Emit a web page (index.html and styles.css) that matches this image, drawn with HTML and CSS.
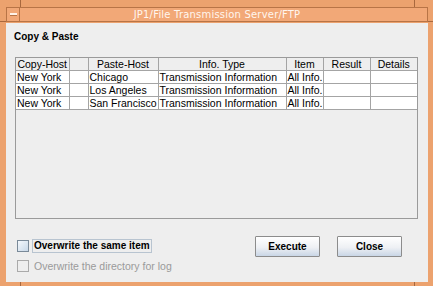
FILE: index.html
```html
<!DOCTYPE html>
<html lang="en">
<head>
	<meta charset="UTF-8">
	<title>JP1/File Transmission Server/FTP</title>
	<link rel="stylesheet" href="styles.css">
</head>
<body>
<div class="window">
	<i class="notch notch-tl"></i>
	<i class="notch notch-tr"></i>
	<i class="notch notch-bl"></i>
	<i class="notch notch-br"></i>
	<i class="notch notch-lt"></i>
	<i class="notch notch-rt"></i>
	<div class="titlebar">
		<span class="menu-btn"><i></i></span>
		<span class="title">JP1/File Transmission Server/FTP</span>
	</div>
	<div class="content">
		<p class="heading">Copy &amp; Paste</p>
		<div class="pane">
			<table class="grid">
				<colgroup>
					<col style="width: 53px">
					<col style="width: 19px">
					<col style="width: 70px">
					<col style="width: 128px">
					<col style="width: 37px">
					<col style="width: 47px">
					<col>
				</colgroup>
				<thead>
				<tr>
					<th>Copy-Host</th>
					<th></th>
					<th>Paste-Host</th>
					<th>Info. Type</th>
					<th>Item</th>
					<th>Result</th>
					<th>Details</th>
				</tr>
				</thead>
				<tbody>
				<tr>
					<td>New York</td>
					<td></td>
					<td>Chicago</td>
					<td>Transmission Information</td>
					<td>All Info.</td>
					<td></td>
					<td></td>
				</tr>
				<tr>
					<td>New York</td>
					<td></td>
					<td>Los Angeles</td>
					<td>Transmission Information</td>
					<td>All Info.</td>
					<td></td>
					<td></td>
				</tr>
				<tr>
					<td>New York</td>
					<td></td>
					<td>San Francisco</td>
					<td>Transmission Information</td>
					<td>All Info.</td>
					<td></td>
					<td></td>
				</tr>
				</tbody>
			</table>
		</div>
		<div class="footer">
			<div class="options">
				<label class="check"><i class="box"></i><span class="focus">Overwrite the same item</span></label>
				<label class="check disabled"><i class="box"></i><span>Overwrite the directory for log</span></label>
			</div>
			<div class="actions">
				<button>Execute</button>
				<button>Close</button>
			</div>
		</div>
	</div>
</div>
</body>
</html>
```
FILE: styles.css
```css
body {
	margin: 0;
	background: #FFF;
	font-family: "Liberation Sans", Arial, sans-serif;
	font-size: 10.5px;
	color: #000;
}

.window {
	position: relative;
	width: 433px;
	height: 286px;
	box-sizing: border-box;
	padding: 7px 5px 4px 6px;
	background: #ECA26E;
	display: flex;
	flex-direction: column;
}

.notch {
	position: absolute;
	background: #A8683E;
}

.notch-tl { left: 20px; top: 0; width: 1px; height: 7px; }
.notch-tr { left: 414px; top: 0; width: 1px; height: 7px; }
.notch-bl { left: 20px; bottom: 0; width: 1px; height: 4px; }
.notch-br { left: 414px; bottom: 0; width: 1px; height: 4px; }
.notch-lt { left: 0; top: 21px; width: 6px; height: 1px; }
.notch-rt { right: 0; top: 21px; width: 5px; height: 1px; }

.titlebar {
	height: 15px;
	box-sizing: border-box;
	border: 1px solid #B87446;
	background: #F2A877;
	display: flex;
	align-items: center;
	position: relative;
}

.menu-btn {
	width: 13px;
	height: 13px;
	box-sizing: border-box;
	border-right: 1px solid #B87446;
	display: flex;
	align-items: center;
	justify-content: center;
}

.menu-btn i {
	width: 7px;
	height: 2px;
	background: #FFF3E8;
	border-bottom: 1px solid #B87446;
}

.titlebar .title {
	flex: 1;
	text-align: center;
	font-family: "DejaVu Sans", sans-serif;
	font-size: 10px;
	letter-spacing: 0.2px;
	color: #FFF6EE;
	margin-right: 13px;
}

.content {
	flex: 1;
	margin-top: 1px;
	background: #EEEEEE;
	padding: 7px 10px 0 9px;
	display: flex;
	flex-direction: column;
}

.heading {
	margin: 0 0 0 -1px;
	font-size: 10px;
	font-weight: bold;
	line-height: 13px;
}

.pane {
	margin-top: 14px;
	height: 162px;
	box-sizing: border-box;
	border: 1px solid #9A9A9A;
	background: #EEEEEE;
}

.grid {
	width: 100%;
	border-collapse: collapse;
	table-layout: fixed;
}

.grid th,
.grid td {
	border: 1px solid #A4A4A4;
	height: 12px;
	padding: 0 1px;
	line-height: 12px;
	white-space: nowrap;
	overflow: hidden;
}

.grid tr:first-child th {
	border-top: none;
}

.grid th:first-child,
.grid td:first-child {
	border-left: none;
}

.grid th:last-child,
.grid td:last-child {
	border-right: none;
}

.grid th {
	font-weight: normal;
	background: #EEEEEE;
}

.grid td {
	background: #FFF;
}

.footer {
	display: flex;
	justify-content: space-between;
	padding-top: 17px;
}

.options {
	display: flex;
	flex-direction: column;
	gap: 7px;
	padding-top: 3px;
}

.check {
	display: flex;
	align-items: center;
	gap: 3px;
	font-size: 10px;
	font-weight: bold;
	margin-left: 2px;
}

.check .box {
	width: 12px;
	height: 12px;
	box-sizing: border-box;
	border: 1px solid #7A8A99;
	background: linear-gradient(135deg, #F4F8FC, #C8D8E8);
}

.check .focus {
	border: 1px solid #B8C4D0;
	padding: 0 1px;
	line-height: 12px;
}

.check.disabled {
	font-size: 10.5px;
	font-weight: normal;
	color: #9A9A9A;
}

.check.disabled .box {
	border-color: #AAAAAA;
	background: #EEEEEE;
}

.check.disabled span {
	padding: 0 2px;
}

.actions {
	display: flex;
	gap: 17px;
	margin-right: 16px;
}

.actions button {
	width: 65px;
	height: 21px;
	border: 1px solid #8C8C8C;
	border-radius: 1px;
	background: linear-gradient(#FFFFFF, #EEF0F4 55%, #C9D6E6);
	font-family: "Liberation Sans", Arial, sans-serif;
	font-size: 10px;
	font-weight: bold;
	color: #000;
	padding: 0;
}
```
